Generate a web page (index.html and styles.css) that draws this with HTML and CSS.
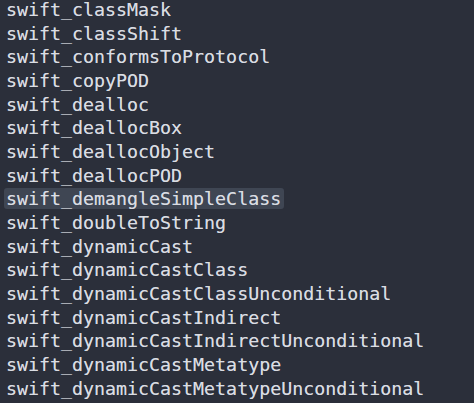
FILE: index.html
```html
<!DOCTYPE html>
<html>
<head>
<meta charset="utf-8">
<link rel="stylesheet" href="styles.css">
</head>
<body>
<div class="list">
  <div class="row">swift_classMask</div>
  <div class="row">swift_classShift</div>
  <div class="row">swift_conformsToProtocol</div>
  <div class="row">swift_copyPOD</div>
  <div class="row">swift_dealloc</div>
  <div class="row">swift_deallocBox</div>
  <div class="row">swift_deallocObject</div>
  <div class="row">swift_deallocPOD</div>
  <div class="row"><span class="hl">swift_demangleSimpleClass</span></div>
  <div class="row">swift_doubleToString</div>
  <div class="row">swift_dynamicCast</div>
  <div class="row">swift_dynamicCastClass</div>
  <div class="row">swift_dynamicCastClassUnconditional</div>
  <div class="row">swift_dynamicCastIndirect</div>
  <div class="row">swift_dynamicCastIndirectUnconditional</div>
  <div class="row">swift_dynamicCastMetatype</div>
  <div class="row">swift_dynamicCastMetatypeUnconditional</div>
</div>
</body>
</html>
```
FILE: styles.css
```css
html, body {
  margin: 0;
  padding: 0;
  background: #2b2f3a;
  height: 100%;
  overflow: hidden;
}
.list {
  margin-top: -2px;
  padding-left: 6px;
  font-family: "DejaVu Sans Mono", "Liberation Mono", monospace;
  font-size: 18.3px;
  line-height: 23.68px;
  color: #dadde3;
  white-space: nowrap;
  text-shadow: 0 0 0.4px rgba(218, 221, 227, 0.6);
}
.row {
  height: 23.68px;
}
.hl {
  background: #3f4653;
  border-radius: 3px;
  padding: 0 3px 0 2px;
  margin-left: -2px;
}
```
